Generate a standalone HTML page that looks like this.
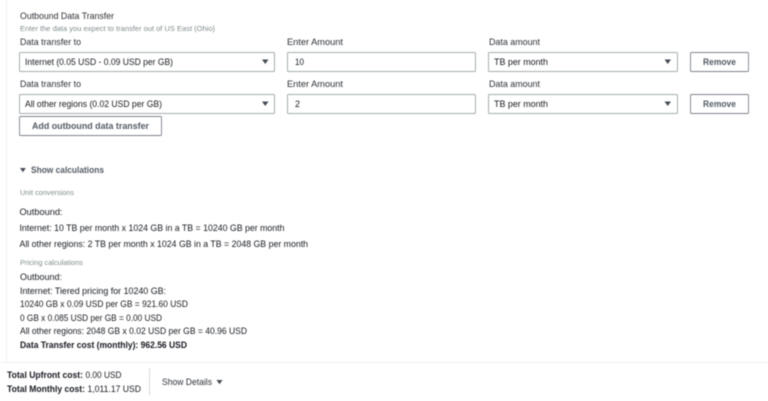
<!DOCTYPE html>
<html lang="en">
<head>
<meta charset="utf-8">
<title>Outbound Data Transfer</title>
<style>
html,body{margin:0;padding:0;width:768px;height:401px;overflow:hidden;background:#fff}
svg{display:block;filter:blur(0.45px)}
text{font-family:"Liberation Sans",sans-serif;font-size:9.5px;fill:#16191f}
.l{fill:#2b3036}
.s{font-size:7.2px;fill:#7f8c8d}
.b{font-weight:bold}
.btn{font-weight:bold;fill:#545b64}
.box{fill:#fff;stroke:#a4adb0;stroke-width:1}
.btnbox{fill:#fff;stroke:#7d848c;stroke-width:.9}
.a{fill:#444b53}
</style>
</head>
<body>
<svg width="768" height="401" viewBox="0 0 768 401" xmlns="http://www.w3.org/2000/svg">
<rect x="6" y="0" width="1" height="362" fill="#f0f2f2"/>
<rect x="0" y="362" width="768" height="1" fill="#f0f2f2"/>

<text class="l" x="20" y="19" textLength="94" lengthAdjust="spacingAndGlyphs">Outbound Data Transfer</text>
<text class="s" x="20" y="31" textLength="195" lengthAdjust="spacingAndGlyphs">Enter the data you expect to transfer out of US East (Ohio)</text>

<text class="l" x="20" y="45" textLength="61" lengthAdjust="spacingAndGlyphs">Data transfer to</text>
<text class="l" x="287" y="45" textLength="56" lengthAdjust="spacingAndGlyphs">Enter Amount</text>
<text class="l" x="489" y="45" textLength="51" lengthAdjust="spacingAndGlyphs">Data amount</text>

<rect class="box" x="19.5" y="52.5" width="255" height="19" rx="1"/>
<text x="25" y="65" textLength="148" lengthAdjust="spacingAndGlyphs">Internet (0.05 USD - 0.09 USD per GB)</text>
<path class="a" d="M262 59.500h6.500l-3.250 4.500z"/>
<rect class="box" x="287.5" y="52.5" width="188" height="19" rx="1"/>
<text x="295" y="65" textLength="9" lengthAdjust="spacingAndGlyphs">10</text>
<rect class="box" x="488.5" y="52.5" width="189" height="19" rx="1"/>
<text x="494" y="65" textLength="54" lengthAdjust="spacingAndGlyphs">TB per month</text>
<path class="a" d="M664.500 59.500h6.500l-3.250 4.500z"/>
<rect class="btnbox" x="690.5" y="52.5" width="58" height="19" rx="1"/>
<text class="btn" x="703" y="65" textLength="33" lengthAdjust="spacingAndGlyphs">Remove</text>

<text class="l" x="20" y="87" textLength="61" lengthAdjust="spacingAndGlyphs">Data transfer to</text>
<text class="l" x="287" y="87" textLength="56" lengthAdjust="spacingAndGlyphs">Enter Amount</text>
<text class="l" x="489" y="87" textLength="51" lengthAdjust="spacingAndGlyphs">Data amount</text>

<rect class="box" x="19.5" y="94.5" width="255" height="19" rx="1"/>
<text x="25" y="107" textLength="137" lengthAdjust="spacingAndGlyphs">All other regions (0.02 USD per GB)</text>
<path class="a" d="M262 101.500h6.500l-3.250 4.500z"/>
<rect class="box" x="287.5" y="94.5" width="188" height="19" rx="1"/>
<text x="295" y="107" textLength="5" lengthAdjust="spacingAndGlyphs">2</text>
<rect class="box" x="488.5" y="94.5" width="189" height="19" rx="1"/>
<text x="494" y="107" textLength="54" lengthAdjust="spacingAndGlyphs">TB per month</text>
<path class="a" d="M664.500 101.500h6.500l-3.250 4.500z"/>
<rect class="btnbox" x="690.5" y="94.5" width="58" height="19" rx="1"/>
<text class="btn" x="703" y="107" textLength="33" lengthAdjust="spacingAndGlyphs">Remove</text>

<rect class="btnbox" x="19.5" y="116.5" width="142" height="19" rx="1"/>
<text class="btn" x="32" y="129" textLength="117" lengthAdjust="spacingAndGlyphs">Add outbound data transfer</text>

<path class="a" d="M20 168h5.800l-2.900 4.200z"/>
<text class="btn" x="31" y="173" textLength="73" lengthAdjust="spacingAndGlyphs">Show calculations</text>

<text class="s" x="20" y="195" textLength="54" lengthAdjust="spacingAndGlyphs">Unit conversions</text>
<text x="19.500" y="215" textLength="43" lengthAdjust="spacingAndGlyphs">Outbound:</text>
<text x="19.500" y="231" textLength="265" lengthAdjust="spacingAndGlyphs">Internet: 10 TB per month x 1024 GB in a TB = 10240 GB per month</text>
<text x="19.500" y="247" textLength="288.500" lengthAdjust="spacingAndGlyphs">All other regions: 2 TB per month x 1024 GB in a TB = 2048 GB per month</text>
<text class="s" x="20" y="265" textLength="63" lengthAdjust="spacingAndGlyphs">Pricing calculations</text>

<text x="20" y="280" textLength="42" lengthAdjust="spacingAndGlyphs">Outbound:</text>
<text x="20" y="294" textLength="146" lengthAdjust="spacingAndGlyphs">Internet: Tiered pricing for 10240 GB:</text>
<text x="20" y="307" textLength="168" lengthAdjust="spacingAndGlyphs">10240 GB x 0.09 USD per GB = 921.60 USD</text>
<text x="20" y="321" textLength="142" lengthAdjust="spacingAndGlyphs">0 GB x 0.085 USD per GB = 0.00 USD</text>
<text x="20" y="334" textLength="227" lengthAdjust="spacingAndGlyphs">All other regions: 2048 GB x 0.02 USD per GB = 40.96 USD</text>
<text class="b" x="20" y="348" textLength="167" lengthAdjust="spacingAndGlyphs">Data Transfer cost (monthly): 962.56 USD</text>

<text class="b" x="7" y="378" textLength="76" lengthAdjust="spacingAndGlyphs">Total Upfront cost:</text>
<text x="85.500" y="378" textLength="36" lengthAdjust="spacingAndGlyphs">0.00 USD</text>
<text class="b" x="7" y="392" textLength="78" lengthAdjust="spacingAndGlyphs">Total Monthly cost:</text>
<text x="87.500" y="392" textLength="53.500" lengthAdjust="spacingAndGlyphs">1,011.17 USD</text>
<rect x="149" y="368" width="1" height="27" fill="#d5dbdb"/>
<text class="l" x="162" y="385" textLength="50" lengthAdjust="spacingAndGlyphs">Show Details</text>
<path class="a" d="M216.500 380h6l-3 4.200z"/>
</svg>
</body>
</html>
